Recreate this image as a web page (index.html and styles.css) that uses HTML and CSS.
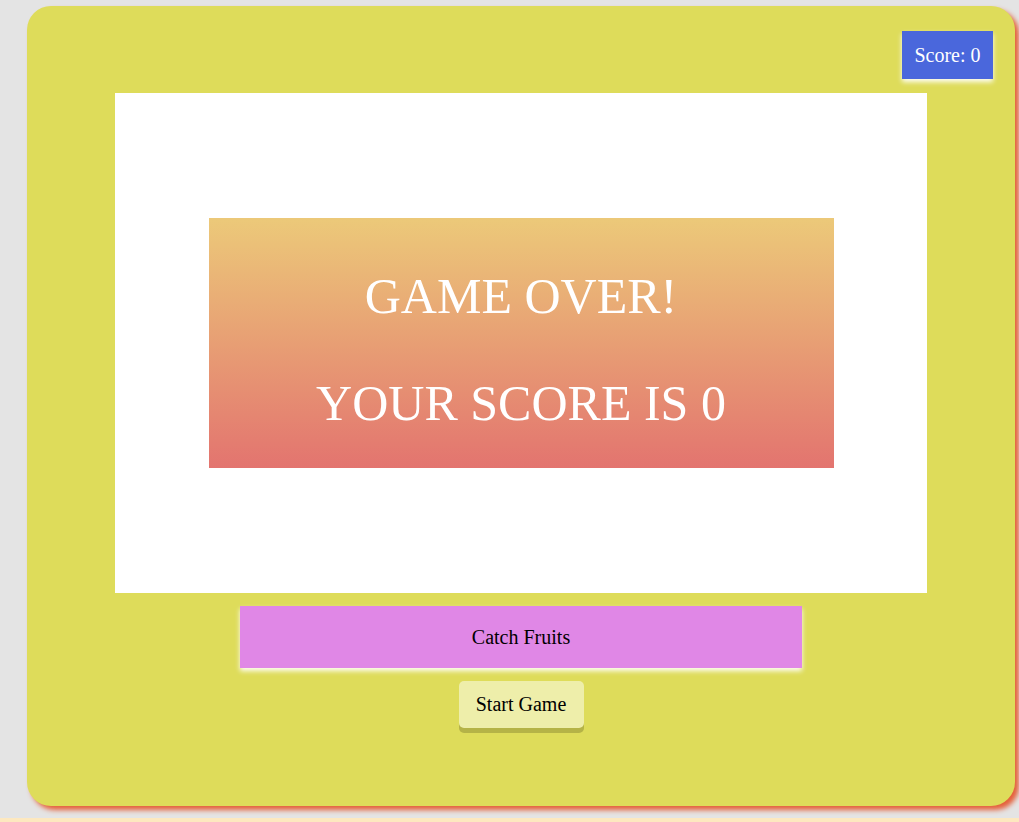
FILE: index.html
```html
<!DOCTYPE html>
<html lang="en">
<head>
<meta charset="utf-8">
<title>Catch Fruits</title>
<link rel="stylesheet" href="styles.css">
</head>
<body>
<div class="page">
  <main class="game-card">
    <div class="score">Score: 0</div>
    <section class="board">
      <div class="over">
        <p class="over-line">GAME OVER!</p>
        <p class="over-line">YOUR SCORE IS 0</p>
      </div>
    </section>
    <div class="title-bar">Catch Fruits</div>
    <button class="start-btn" type="button">Start Game</button>
  </main>
  <div class="footer-strip"></div>
</div>
</body>
</html>
```

FILE: styles.css
```css
html, body {
  margin: 0;
  padding: 0;
}

body {
  background: #e4e4e4;
  font-family: "Liberation Serif", "Times New Roman", serif;
  overflow: hidden;
}

.page {
  display: flex;
  flex-direction: column;
  padding-top: 6px;
  gap: 12px;
}

.game-card {
  position: relative;
  box-sizing: border-box;
  margin-left: 27px;
  width: 988px;
  height: 800px;
  background: #dedc5a;
  border-radius: 24px;
  box-shadow: 4px 4px 5px #e5603a;
  padding-top: 87px;
  display: flex;
  flex-direction: column;
  align-items: center;
}

.score {
  position: absolute;
  top: 25px;
  right: 22px;
  width: 91px;
  height: 48px;
  background: #4a67dc;
  color: #ffffff;
  font-size: 20px;
  display: flex;
  align-items: center;
  justify-content: center;
  box-shadow: 0 3px 5px rgba(255, 255, 255, 0.95);
}

.board {
  width: 812px;
  height: 500px;
  background: #ffffff;
  display: flex;
  align-items: center;
  justify-content: center;
}

.over {
  box-sizing: border-box;
  width: 625px;
  height: 250px;
  background: linear-gradient(to bottom, #ecc979, #e3746f);
  color: #ffffff;
  display: flex;
  flex-direction: column;
  align-items: center;
  padding-top: 51px;
  gap: 52px;
}

.over-line {
  margin: 0;
  font-size: 50px;
  line-height: 55px;
}

.title-bar {
  margin-top: 13px;
  width: 562px;
  height: 62px;
  background: #e087e6;
  color: #000000;
  font-size: 20px;
  display: flex;
  align-items: center;
  justify-content: center;
  box-shadow: 0 3px 5px rgba(255, 255, 255, 0.95);
}

.start-btn {
  margin-top: 13px;
  width: 125px;
  height: 47px;
  border: none;
  border-radius: 5px;
  background: #eeeeaa;
  color: #000000;
  font-family: "Liberation Serif", "Times New Roman", serif;
  font-size: 20px;
  box-shadow: 0 5px 0 #b5b347;
  padding: 0;
}

.footer-strip {
  height: 20px;
  background: #fde8bf;
}
```
